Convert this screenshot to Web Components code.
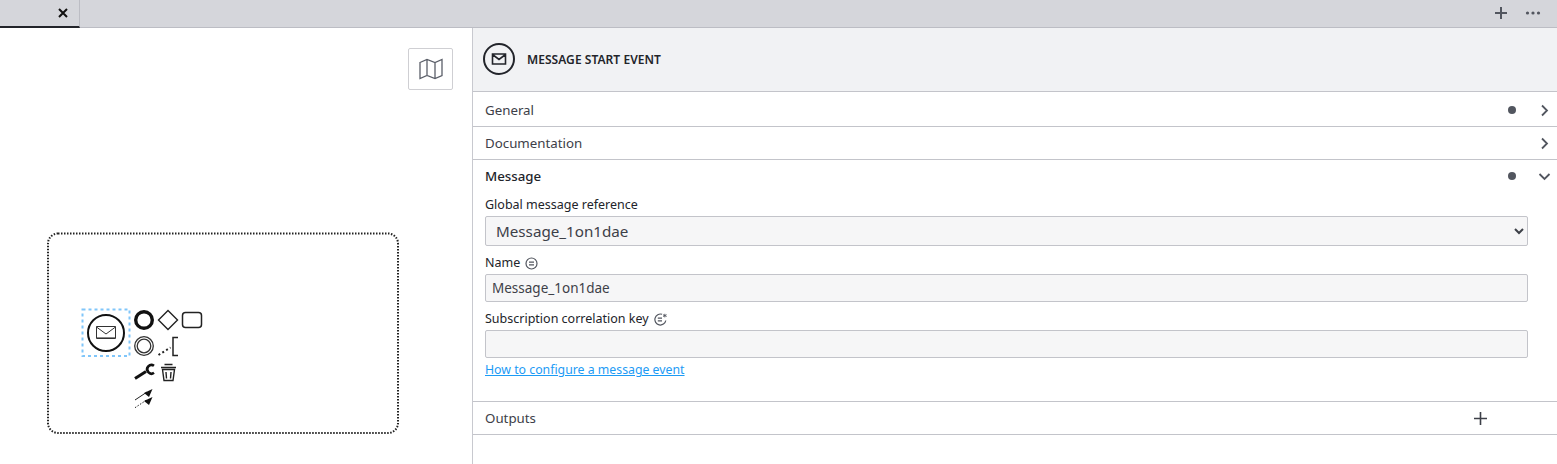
<!DOCTYPE html>
<html>
<head>
<meta charset="utf-8">
<title>Message start event</title>
<style>
  html, body { margin: 0; height: 100%; background: #fff; overflow: hidden; }
  body { font-family: "Noto Sans", "Liberation Sans", sans-serif; color: #22242a; }
</style>
</head>
<body>
<app-shell>
  <tab-bar slot="tabs"></tab-bar>
  <diagram-canvas slot="canvas"></diagram-canvas>
  <props-panel slot="props">
    <panel-header title="MESSAGE START EVENT"></panel-header>
    <prop-group label="General" dot first></prop-group>
    <prop-group label="Documentation"></prop-group>
    <prop-group label="Message" dot open>
      <prop-field label="Global message reference" kind="select" value="Message_1on1dae"></prop-field>
      <prop-field label="Name" icon="equal" kind="input" value="Message_1on1dae"></prop-field>
      <prop-field label="Subscription correlation key" icon="feel" kind="input" value=""></prop-field>
      <a class="doc" href="#" style="display:block;margin-top:-2px;font-size:12.3px;line-height:16px;color:#1c9bf5;">How to configure a message event</a>
    </prop-group>
    <prop-group label="Outputs" add></prop-group>
  </props-panel>
</app-shell>

<script>
// App layout: tab bar on top, canvas and properties below
class AppShell extends HTMLElement {
  constructor() {
    super();
    this.attachShadow({ mode: 'open' });
    this.shadowRoot.innerHTML = `
      <style>
        :host { display: flex; flex-direction: column; width: 1557px; height: 464px; }
        .main { flex: 1; display: grid; grid-template-columns: 472px 1fr; min-height: 0; }
      </style>
      <slot name="tabs"></slot>
      <div class="main">
        <slot name="canvas"></slot>
        <slot name="props"></slot>
      </div>`;
  }
}

class TabBar extends HTMLElement {
  constructor() {
    super();
    this.attachShadow({ mode: 'open' });
    this.shadowRoot.innerHTML = `
      <style>
        :host { display: flex; height: 28px; box-sizing: border-box; background: #d5d6db; border-bottom: 1px solid #bcbdc4; justify-content: space-between; }
        .tab { width: 80px; height: 28px; box-sizing: border-box; border-right: 1px solid #bcbdc4; border-bottom: 2px solid #22242a; display: flex; justify-content: flex-end; align-items: center; padding: 0 10px 0 0; }
        .actions { display: flex; align-items: center; gap: 17px; padding-right: 16px; height: 28px; margin-top: -1px; }
        svg { display: block; }
      </style>
      <div class="tab">
        <svg width="12" height="12" viewBox="0 0 12 12"><path d="M2 2l8 8M10 2l-8 8" stroke="#111" stroke-width="2" fill="none"/></svg>
      </div>
      <div class="actions">
        <svg width="14" height="14" viewBox="0 0 14 14"><path d="M7 1v12M1 7h12" stroke="#52565f" stroke-width="2" fill="none"/></svg>
        <svg width="16" height="14" viewBox="0 0 16 14"><circle cx="2.500" cy="7" r="1.600" fill="#52565f"/><circle cx="8" cy="7" r="1.600" fill="#52565f"/><circle cx="13.500" cy="7" r="1.600" fill="#52565f"/></svg>
      </div>`;
  }
}

// Free canvas, the shapes are placed by diagram coordinates
class DiagramCanvas extends HTMLElement {
  constructor() {
    super();
    this.attachShadow({ mode: 'open' });
    this.shadowRoot.innerHTML = `
      <style>
        :host { display: block; position: relative; background: #fff; overflow: hidden; }
        svg.d { position: absolute; left: 0; top: 0; }
        .map { position: absolute; left: 408px; top: 20px; width: 45px; height: 42px; box-sizing: border-box; border: 1px solid #cfcfd3; border-radius: 2px; background: #fff; display: flex; align-items: center; justify-content: center; }
      </style>
      <svg class="d" width="472" height="436" viewBox="0 28 472 436">
        <rect x="48" y="233.500" width="350" height="199.500" rx="10" fill="none" stroke="#222" stroke-width="2" stroke-dasharray="1.500 1.500"/>
        <rect x="82.500" y="309.500" width="47" height="46.500" fill="none" stroke="#80c6fa" stroke-width="2" stroke-dasharray="3 3"/>
        <circle cx="106" cy="333" r="18" fill="#fff" stroke="#111" stroke-width="2"/>
        <path d="M96.500 326.500h19v12h-19zM96.500 327l9.500 7 9.500-7" fill="none" stroke="#333" stroke-width="1"/>
        <path d="M97 337.500h18" stroke="#888" stroke-width="1"/>
        <circle cx="144" cy="320" r="8.300" fill="none" stroke="#111" stroke-width="3.400"/>
        <path d="M168 310.500l9.500 9.500-9.500 9.500-9.500-9.500z" fill="none" stroke="#222" stroke-width="1.400"/>
        <rect x="182.500" y="312.500" width="19" height="15" rx="3" fill="none" stroke="#222" stroke-width="1.500"/>
        <circle cx="144" cy="346" r="9.300" fill="none" stroke="#333" stroke-width="1.300"/>
        <circle cx="144" cy="346" r="6.800" fill="none" stroke="#333" stroke-width="1.300"/>
        <path d="M158.500 355l12-7.500" fill="none" stroke="#222" stroke-width="2" stroke-dasharray="2 2.500"/>
        <path d="M178 337.500h-5v18h5" fill="none" stroke="#222" stroke-width="1.500"/>
        <path d="M135 378.500l11-7" fill="none" stroke="#111" stroke-width="3"/>
        <path d="M154 365.800a4.300 4.300 0 1 0 0 7" fill="none" stroke="#111" stroke-width="2.600"/>
        <path d="M161 367.500h15M164.500 364.500h8M162.500 369.500l1.500 11h9l1.500-11zM166 372l.5 6.500M171 372l-.5 6.500" fill="none" stroke="#222" stroke-width="1.400"/>
        <path d="M135 400l12-8" fill="none" stroke="#222" stroke-width="1"/>
        <path d="M152.500 389l-8.500 4 5 4z" fill="#111"/>
        <path d="M135 407.700l12-8" fill="none" stroke="#222" stroke-width="1" stroke-dasharray="1.500 1.500"/>
        <path d="M152.500 397l-8.500 4 5 4z" fill="#111"/>
      </svg>
      <div class="map">
        <svg width="26" height="22" viewBox="0 0 26 22"><path d="M2 4.500l7-3 8 3 7-3v16l-7 3-8-3-7 3zM9 1.500v16M17 4.500v16" fill="none" stroke="#5b5f69" stroke-width="1.300"/></svg>
      </div>`;
  }
}

class PropsPanel extends HTMLElement {
  constructor() {
    super();
    this.attachShadow({ mode: 'open' });
    this.shadowRoot.innerHTML = `
      <style>
        :host { display: flex; flex-direction: column; border-left: 1px solid #c8c9cf; background: #fff; min-width: 0; }
      </style>
      <slot></slot>`;
  }
}

class PanelHeader extends HTMLElement {
  constructor() {
    super();
    this.attachShadow({ mode: 'open' });
    this.shadowRoot.innerHTML = `
      <style>
        :host { display: flex; align-items: center; gap: 12px; height: 64px; box-sizing: border-box; padding: 0 0 1px 10px; background: #f1f2f4; border-bottom: 1px solid #c3c4ca; }
        .t { font-size: 12px; font-weight: 600; letter-spacing: .05px; color: #22242a; }
        svg { display: block; }
      </style>
      <svg width="32" height="32" viewBox="0 0 32 32">
        <circle cx="16" cy="16" r="15" fill="none" stroke="#22242a" stroke-width="2"/>
        <path d="M9.500 11h13v10h-13zM9.500 11.500l6.500 5 6.500-5" fill="none" stroke="#22242a" stroke-width="1.600"/>
      </svg>
      <span class="t"></span>`;
    this.shadowRoot.querySelector('.t').textContent = this.getAttribute('title');
  }
}

class PropGroup extends HTMLElement {
  constructor() {
    super();
    this.attachShadow({ mode: 'open' });
    const open = this.hasAttribute('open');
    const chevron = open
      ? '<path d="M2.500 5l5 5 5-5" fill="none" stroke="#52565f" stroke-width="1.800"/>'
      : '<path d="M5 2.500l5 5-5 5" fill="none" stroke="#52565f" stroke-width="1.800"/>';
    this.shadowRoot.innerHTML = `
      <style>
        :host { display: block; border-bottom: 1px solid #c3c4ca; font-size: 13.300px; }
        :host([first]) { padding-top: 2px; }
        .head { display: flex; align-items: center; height: 32px; padding: 0 5px 0 12px; }
        .label { flex: 1; color: #3d4048; }
        :host([open]) .label { color: #22242a; font-weight: 500; }
        .dot { width: 8px; height: 8px; border-radius: 50%; background: #52565f; margin-right: 21px; }
        .chev { display: block; }
        .plus { margin-right: 65px; display: block; }
        .body { padding: 2px 29px 23px 12px; display: none; }
        :host([open]) .body { display: block; }
      </style>
      <div class="head">
        <span class="label"></span>
        ${this.hasAttribute('dot') ? '<span class="dot"></span>' : ''}
        ${this.hasAttribute('add')
          ? '<svg class="plus" width="13" height="13" viewBox="0 0 13 13"><path d="M6.500 0v13M0 6.500h13" stroke="#3d4048" stroke-width="1.600" fill="none"/></svg>'
          : `<svg class="chev" width="15" height="15" viewBox="0 0 15 15">${chevron}</svg>`}
      </div>
      <div class="body"><slot></slot></div>`;
    this.shadowRoot.querySelector('.label').textContent = this.getAttribute('label');
  }
}

const FIELD_ICONS = {
  equal: '<circle cx="6.500" cy="6.500" r="5.500" fill="none" stroke="#52565f" stroke-width="1.200"/><path d="M4 5.200h5M4 7.800h5" stroke="#52565f" stroke-width="1.200"/>',
  feel: '<path d="M11.800 7.500a5.500 5.500 0 1 1-3.700-6.200" fill="none" stroke="#52565f" stroke-width="1.200"/><path d="M3.800 5.200h4.200M3.800 7.800h4.200" stroke="#52565f" stroke-width="1.200"/><path d="M10.800 .8v3.600M9 1.700l3.600 1.800M12.600 1.700L9 3.500" stroke="#52565f" stroke-width=".9"/>'
};

class PropField extends HTMLElement {
  constructor() {
    super();
    this.attachShadow({ mode: 'open' });
    const kind = this.getAttribute('kind');
    const value = this.getAttribute('value') || '';
    const icon = FIELD_ICONS[this.getAttribute('icon')];
    const control = kind === 'select'
      ? `<select><option>${value}</option></select>`
      : `<input type="text" value="${value}">`;
    this.shadowRoot.innerHTML = `
      <style>
        :host { display: block; margin-bottom: 6px; }
        .lab { display: flex; align-items: center; gap: 5px; font-size: 12.500px; line-height: 16px; color: #22242a; height: 20px; box-sizing: border-box; padding-top: 2px; margin-bottom: 2px; }
        svg { display: block; }
        select, input { display: block; width: 100%; box-sizing: border-box; font: inherit; color: #3d4048; background-color: #f6f6f7; border: 1px solid #c3c4ca; border-radius: 2px; margin: 0; outline: none; }
        select { height: 30px; padding: 0 6px; font-size: 15.200px; }
        input { height: 28px; padding: 0 6px; font-size: 13.500px; }
      </style>
      <div class="lab"><span></span>${icon ? `<svg width="13" height="13" viewBox="0 0 13 13">${icon}</svg>` : ''}</div>
      ${control}`;
    this.shadowRoot.querySelector('.lab span').textContent = this.getAttribute('label');
  }
}

customElements.define('app-shell', AppShell);
customElements.define('tab-bar', TabBar);
customElements.define('diagram-canvas', DiagramCanvas);
customElements.define('props-panel', PropsPanel);
customElements.define('panel-header', PanelHeader);
customElements.define('prop-group', PropGroup);
customElements.define('prop-field', PropField);
</script>
</body>
</html>
